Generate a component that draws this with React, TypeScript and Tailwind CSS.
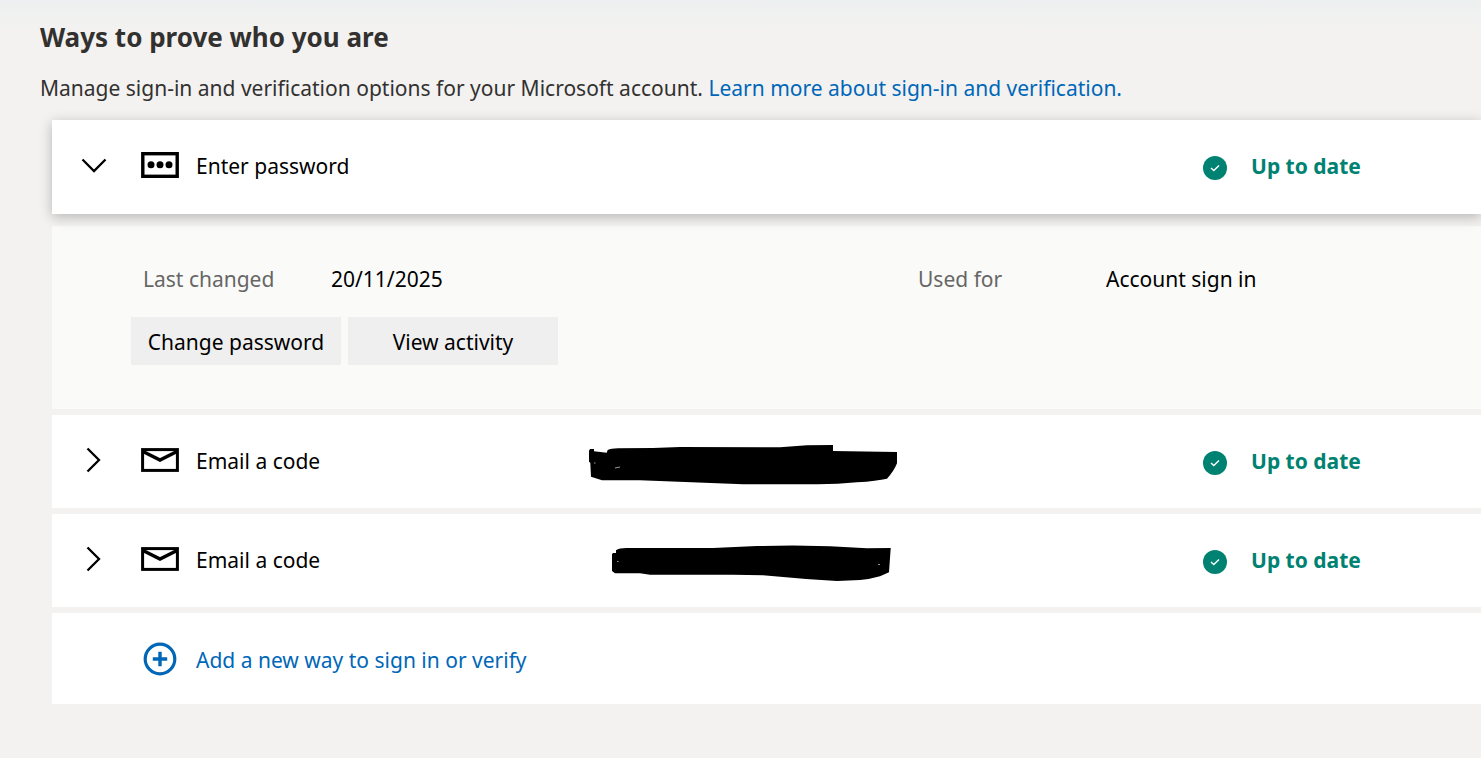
import React from 'react';

interface Method {
  label: string;
  kind: 'password' | 'email';
  expanded?: boolean;
  scribble?: { width: number; height: number; outline: string; specks: string };
}

const methods: Method[] = [
  { label: 'Enter password', kind: 'password', expanded: true },
  {
    label: 'Email a code',
    kind: 'email',
    scribble: {
      width: 310,
      height: 42,
      outline:
        'M1 6.7 2 5H6V7.3L18.7 8.7 19.7 6Q23 4.5 30 4.3L65 4 92 3 192 3.3 219 1.3 245 1V7L309 8V19.3Q306 27 299 34.7Q289 37 269 38.3Q250 40.3 229 40.3H155L52 36.3H14L3 32.7 2.3 18.7 1 17.7Z',
      specks: 'M27 24l5-1M6 19h1.5',
    },
  },
  {
    label: 'Email a code',
    kind: 'email',
    scribble: {
      width: 280,
      height: 37,
      outline:
        'M1 9.3 2 8H5V5.3Q8 3 15.7 3H102L146 1 182 .5 219 1.3 256 3.3 279.7 3 278 27.3 269 31.3Q260 34 249 35L226 36Q190 34 152 30.3L122 29.7H39L29 28.3H4L1 26Z',
      specks: 'M6 16.5h1.5M267 19.5h2',
    },
  },
];

const Chevron = ({ open }: { open?: boolean }) => (
  <svg viewBox="0 0 26 26" className="h-[26px] w-[26px]" fill="none" stroke="#000" strokeWidth="2.3">
    <path d={open ? 'M1.5 7.5 13 19 24.5 7.5' : 'M6.5 1.5 18 13 6.5 24.5'} />
  </svg>
);

const MethodIcon = ({ kind }: { kind: Method['kind'] }) => (
  <svg viewBox="0 0 38 26" className="h-[26px] w-[38px]" fill="none" stroke="#000" strokeWidth="3">
    {kind === 'password' ? (
      <>
        <rect x="1.8" y="1.7" width="34.4" height="22.6" strokeWidth="3.4" />
        <g fill="#000" stroke="none">
          <circle cx="10" cy="12.7" r="3.5" />
          <circle cx="19" cy="12.7" r="3.5" />
          <circle cx="28" cy="12.7" r="3.5" />
        </g>
      </>
    ) : (
      <>
        <rect x="1.6" y="2.6" width="34.8" height="20.8" />
        <path d="M2 4.5 19 13 36 4.5" strokeWidth="3.6" />
      </>
    )}
  </svg>
);

const Status = () => (
  <span className="flex items-center gap-6 pb-[2px] font-bold text-[#008272]">
    <svg viewBox="0 0 24 24" className="mt-1 h-6 w-6">
      <circle cx="12" cy="12" r="12" fill="#008272" />
      <path d="M8 12l2.8 2.6 5.2-5" fill="none" stroke="#fff" strokeWidth="1.4" />
    </svg>
    Up to date
  </span>
);

const MethodRow = ({ method }: { method: Method }) => (
  <button
    type="button"
    aria-expanded={!!method.expanded}
    className={
      method.expanded
        ? 'relative grid h-[94px] w-full grid-cols-[536fr_615fr_278fr] items-center bg-white text-left shadow-[0_3px_12px_rgba(0,0,0,0.25)]'
        : 'grid h-[93px] w-full grid-cols-[536fr_615fr_278fr] items-center bg-white text-left'
    }
  >
    <span className="flex items-center pb-1 pl-[29px]">
      <Chevron open={method.expanded} />
      <span className="ml-[34px]">
        <MethodIcon kind={method.kind} />
      </span>
      <span className="ml-[17px] pt-[2px]">{method.label}</span>
    </span>
    <span className="pt-[6px]">
      {method.scribble && (
        <svg
          width={method.scribble.width}
          height={method.scribble.height}
          className={method.scribble.width < 300 ? 'ml-[23px]' : ''}
        >
          <path d={method.scribble.outline} fill="#000" />
          <path d={method.scribble.specks} stroke="#999" strokeWidth="1" />
        </svg>
      )}
    </span>
    <Status />
  </button>
);

const Detail = ({ label, value }: { label: string; value: string }) => (
  <div className="flex">
    <dt className="w-[188px] text-[#666]">{label}</dt>
    <dd>{value}</dd>
  </div>
);

const PasswordDetails = () => (
  <div className="mt-3 h-[183px] bg-[#fafaf8] pt-[38px]">
    <dl className="grid grid-cols-[775fr_563fr] pl-[91px]">
      <Detail label="Last changed" value="20/11/2025" />
      <Detail label="Used for" value="Account sign in" />
    </dl>
    <div className="mt-[23px] flex gap-[7px] pl-[79px]">
      <button type="button" className="h-12 w-[210px] bg-[#efefef] pt-[2px]">
        Change password
      </button>
      <button type="button" className="h-12 w-[210px] bg-[#efefef] pt-[2px]">
        View activity
      </button>
    </div>
  </div>
);

const App: React.FC = () => {
  return (
    <main className="min-h-screen overflow-hidden bg-[#f3f2f1] bg-[linear-gradient(#edf0f0,#f3f2f1_30px)] font-['Noto_Sans',sans-serif] text-[21px] leading-[30px] text-black">
      <h1 className="pt-[19px] pl-10 text-[26px] leading-9 font-bold text-[#323130]">Ways to prove who you are</h1>
      <p className="mt-[18px] pl-10 text-[#323130]">
        Manage sign-in and verification options for your Microsoft account.{' '}
        <a href="#learn-more" className="text-[#0067b8]">
          Learn more about sign-in and verification.
        </a>
      </p>
      <section className="mt-[17px] ml-[52px]">
        {methods.map((method, i) => (
          <div key={i} className="mb-[6px]">
            <MethodRow method={method} />
            {method.expanded && <PasswordDetails />}
          </div>
        ))}
        <a href="#add" className="flex h-[91px] items-center bg-white pl-[91px] text-[#0067b8]">
          <svg viewBox="0 0 34 34" className="h-[34px] w-[34px]" fill="none" stroke="#0067b8">
            <circle cx="17" cy="17" r="14.8" strokeWidth="3.2" />
            <path d="M17 9.8v14.4M9.8 17h14.4" strokeWidth="3.4" />
          </svg>
          <span className="ml-[19px] pt-[2px]">Add a new way to sign in or verify</span>
        </a>
      </section>
    </main>
  );
};

export default App;
